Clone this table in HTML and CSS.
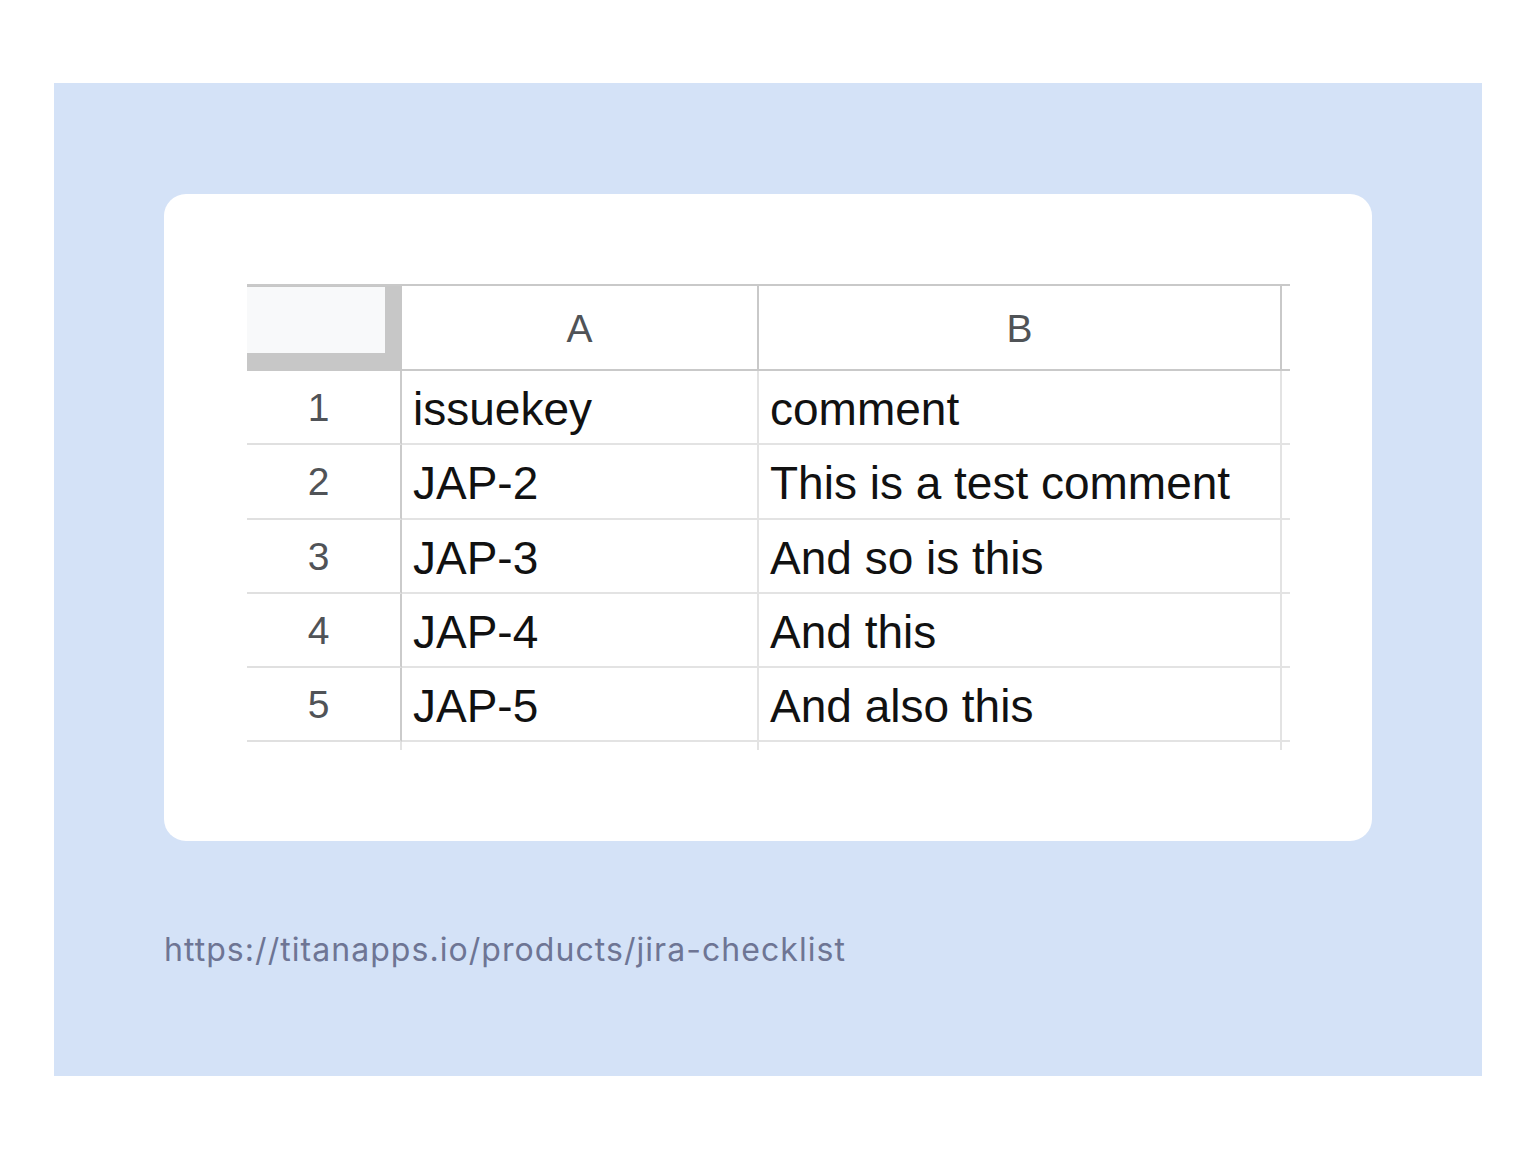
FILE: index.html
```html
<!DOCTYPE html>
<html lang="en">
<head>
<meta charset="utf-8">
<title>Sheet import example</title>
<link rel="stylesheet" href="styles.css">
</head>
<body>
<main class="panel">
  <section class="card">
    <div class="sheet">
      <div class="cell corner"><div class="corner-inner"></div></div>
      <div class="cell colhead">A</div>
      <div class="cell colhead">B</div>
      <div class="cell tail head-tail"></div>

      <div class="cell rownum">1</div>
      <div class="cell data">issuekey</div>
      <div class="cell data">comment</div>
      <div class="cell tail"></div>

      <div class="cell rownum">2</div>
      <div class="cell data">JAP-2</div>
      <div class="cell data">This is a test comment</div>
      <div class="cell tail"></div>

      <div class="cell rownum">3</div>
      <div class="cell data">JAP-3</div>
      <div class="cell data">And so is this</div>
      <div class="cell tail"></div>

      <div class="cell rownum">4</div>
      <div class="cell data">JAP-4</div>
      <div class="cell data">And this</div>
      <div class="cell tail"></div>

      <div class="cell rownum">5</div>
      <div class="cell data">JAP-5</div>
      <div class="cell data">And also this</div>
      <div class="cell tail"></div>

      <div class="cell stub stub-num"></div>
      <div class="cell stub"></div>
      <div class="cell stub"></div>
      <div class="cell stub-end"></div>
    </div>
  </section>
  <p class="url">https://titanapps.io/products/jira-checklist</p>
</main>
</body>
</html>
```

FILE: styles.css
```css
html, body {
  margin: 0;
  padding: 0;
  background: #ffffff;
}

body {
  width: 1536px;
  height: 1160px;
  overflow: hidden;
}

.panel {
  margin: 83px 0 0 54px;
  width: 1428px;
  height: 993px;
  background: #d4e2f7;
  box-sizing: border-box;
  padding: 111px 0 0 110px;
}

.card {
  width: 1208px;
  height: 647px;
  background: #ffffff;
  border-radius: 22px;
  box-sizing: border-box;
  padding: 90px 0 0 83px;
}

.sheet {
  display: grid;
  grid-template-columns: 155px 357px 523px 8px;
  grid-template-rows: 87px repeat(5, 74.3px) 8px;
  width: 1043px;
  font-family: "Liberation Sans", Arial, sans-serif;
}

.cell {
  box-sizing: border-box;
  display: flex;
  align-items: center;
  border-right: 2px solid #e3e3e3;
  border-bottom: 2px solid #e3e3e3;
}

/* header row */
.corner,
.colhead,
.head-tail {
  border-top: 2px solid #c9c9c9;
  border-bottom: 2px solid #c9c9c9;
}

.corner {
  background: #c7c7c7;
  border-right: 0;
  border-bottom: 0;
  align-items: flex-start;
  padding-top: 1px;
}

.corner-inner {
  width: 138px;
  height: 66px;
  background: #f8f9fa;
}

.colhead {
  justify-content: center;
  border-right: 2px solid #c9c9c9;
  font-size: 39px;
  color: #505357;
  padding-top: 2px;
}

.head-tail {
  border-right: 0;
}

/* body rows */
.rownum {
  justify-content: center;
  padding-right: 10px;
  font-size: 39px;
  color: #505357;
  border-right: 2px solid #cbcbcb;
  border-bottom: 2px solid #e0e0e0;
  padding-top: 2px;
}

.rownum:nth-last-child(5) {
  border-bottom-color: #d0d0d0;
}

.data {
  padding-left: 11px;
  font-size: 46px;
  color: #111111;
  padding-top: 4px;
  white-space: nowrap;
}

.tail {
  border-right: 0;
}

/* overhang below the last row */
.stub {
  border-bottom: 0;
}

.stub-end {
  border: 0;
}

.url {
  margin: 89px 0 0 0;
  font-family: "Inter", "Open Sans", sans-serif;
  font-size: 32px;
  line-height: 40px;
  letter-spacing: 1.05px;
  color: #6e7594;
}
```
